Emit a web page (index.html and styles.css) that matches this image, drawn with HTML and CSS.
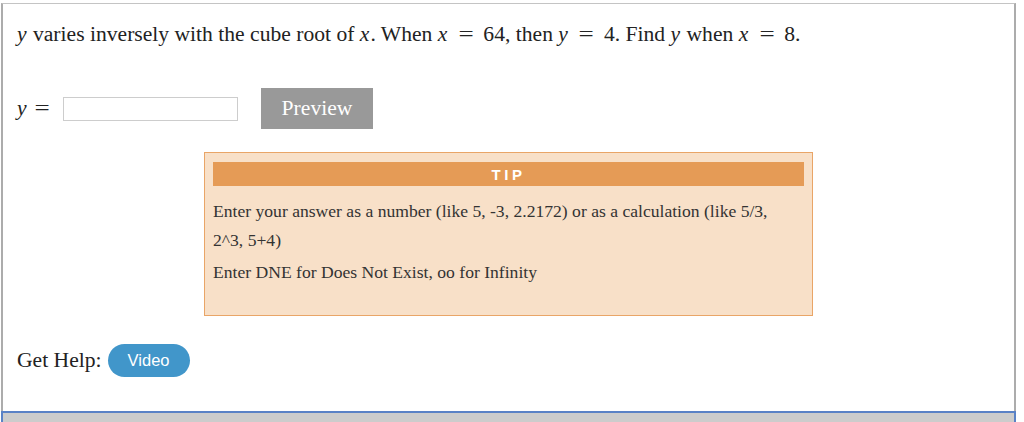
FILE: index.html
```html
<!DOCTYPE html>
<html>
<head>
<meta charset="utf-8">
<link rel="stylesheet" href="styles.css">
</head>
<body>
<div class="page">
  <div class="question">
    <p class="prompt"><i class="m">y</i> varies inversely with the cube root of <i class="m">x</i>. When <i class="m">x</i> <span class="op">=</span> 64, then <i class="m">y</i> <span class="op">=</span> 4. Find <i class="m">y</i> when <i class="m">x</i> <span class="op">=</span> 8.</p>
    <div class="answer-row">
      <span class="label"><i class="m">y</i> <span class="op">=</span></span>
      <input class="answer" type="text">
      <button class="preview">Preview</button>
    </div>
    <div class="tip">
      <div class="tip-head">TIP</div>
      <p class="tip-line">Enter your answer as a number (like 5, -3, 2.2172) or as a calculation (like 5/3, 2^3, 5+4)</p>
      <p class="tip-line">Enter DNE for Does Not Exist, oo for Infinity</p>
    </div>
    <div class="help">
      <span class="help-label">Get Help:</span>
      <button class="video">Video</button>
    </div>
  </div>
  <div class="next"></div>
</div>
</body>
</html>
```

FILE: styles.css
```css
html, body {
  margin: 0;
  padding: 0;
  background: #fff;
}
body {
  font-family: "Liberation Serif", "Times New Roman", serif;
  color: #222;
  overflow: hidden;
}
.page {
  margin: 3px 0 0 1px;
  width: 1015px;
}
.question {
  border: 2px solid #acacac;
  border-top: 1px solid #c4c4c4;
  border-bottom: none;
  height: 408px;
  padding: 0 14px;
  box-sizing: border-box;
}
.m {
  font-family: "Liberation Serif", serif;
  font-style: italic;
  padding-right: 1px;
}
.op {
  display: inline-block;
  padding: 0 6px;
  transform: scaleX(1.25);
}
.prompt {
  margin: 18px 0 0 0;
  font-size: 21.6px;
  line-height: 24px;
}
.answer-row {
  display: flex;
  align-items: center;
  margin-top: 42px;
  height: 41px;
}
.label {
  font-size: 21.6px;
  width: 46px;
}
.label .op {
  padding: 0 3px;
}
.answer {
  width: 175px;
  height: 24px;
  box-sizing: border-box;
  border: 1px solid #cdcdcd;
  margin: 0;
  padding: 0;
}
.preview {
  margin-left: 23px;
  width: 112px;
  height: 41px;
  background: #999;
  color: #fff;
  border: none;
  font-family: "Liberation Serif", serif;
  font-size: 21.6px;
  padding: 0;
}
.tip {
  margin: 23px 0 0 187px;
  width: 609px;
  height: 164px;
  box-sizing: border-box;
  background: #f8e0c8;
  border: 1px solid #e9a567;
  padding: 9px 8px 0 8px;
}
.tip-head {
  background: #e59b56;
  height: 24px;
  color: #fff;
  text-align: center;
  font-family: "Liberation Sans", Arial, sans-serif;
  font-weight: bold;
  font-size: 15px;
  letter-spacing: 3.5px;
  line-height: 25px;
}
.tip-line {
  margin: 0;
  max-width: 575px;
  font-size: 17.6px;
  line-height: 29px;
  color: #333;
}
.tip-line:first-of-type {
  margin-top: 11px;
}
.tip-line + .tip-line {
  margin-top: 3px;
}
.help {
  display: flex;
  align-items: center;
  margin-top: 28px;
}
.help-label {
  font-size: 21.6px;
  color: #222;
}
.video {
  margin-left: 6px;
  width: 82px;
  height: 33px;
  border-radius: 17px;
  border: none;
  background: #4196ca;
  color: #fff;
  font-family: "Liberation Sans", Arial, sans-serif;
  font-size: 16.5px;
  padding: 0;
}
.next {
  height: 20px;
  border: 2px solid #5a82c6;
  border-bottom: none;
  background: #cccccc;
}
```
